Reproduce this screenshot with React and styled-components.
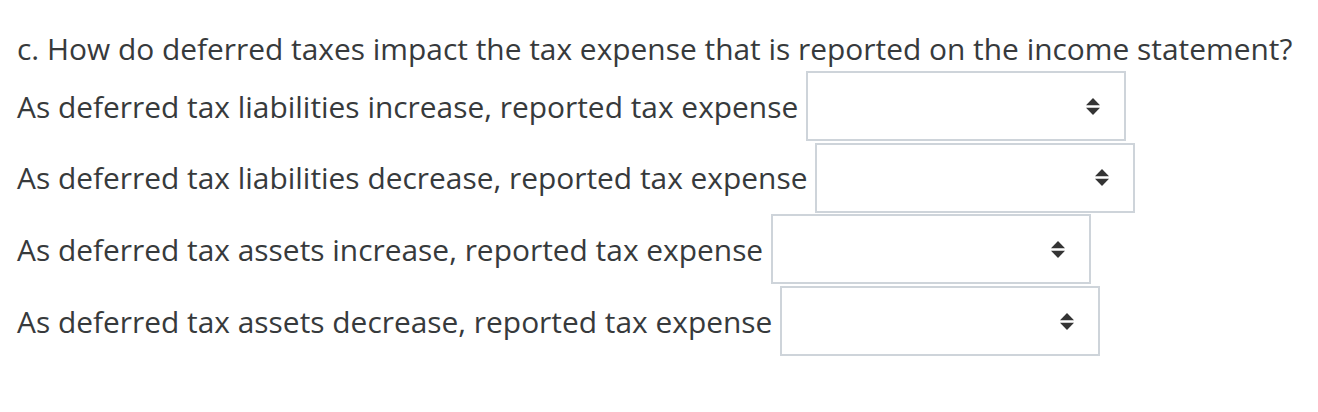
import React from 'react';
import styled, { createGlobalStyle } from 'styled-components';

const GlobalStyle = createGlobalStyle`
  body {
    margin: 0;
    background: #fff;
    font-family: 'Open Sans', 'Liberation Sans', sans-serif;
    color: #373a3c;
  }
`;

const Question = styled.div`
  padding: 26px 0 0 17px;
  font-size: 29.9px;
  line-height: 45px;
`;

const Prompt = styled.p`
  margin: 0;
`;

const Row = styled.div`
  display: flex;
  align-items: center;
  gap: 8px;
  margin-bottom: 1.7px;
`;

const Label = styled.span`
  white-space: nowrap;
`;

const SelectBox = styled.div`
  box-sizing: border-box;
  width: 320px;
  height: 70px;
  border: 2px solid #ced4da;
  background: #fff;
  display: flex;
  align-items: center;
  justify-content: flex-end;
  padding-right: 24px;
`;

// up/down sort caret shown at the right of each select
const SortIcon = () => (
  <svg width="14" height="17" viewBox="0 0 14 17" aria-hidden="true">
    <path d="M7 0 L14 7.3 L0 7.3 Z" fill="#343434" />
    <path d="M0 9.7 L14 9.7 L7 17 Z" fill="#343434" />
  </svg>
);

const rows = [
  'As deferred tax liabilities increase, reported tax expense',
  'As deferred tax liabilities decrease, reported tax expense',
  'As deferred tax assets increase, reported tax expense',
  'As deferred tax assets decrease, reported tax expense',
];

export default function App() {
  return (
    <>
      <GlobalStyle />
      <Question>
        <Prompt>c. How do deferred taxes impact the tax expense that is reported on the income statement?</Prompt>
        {rows.map((text) => (
          <Row key={text}>
            <Label>{text}</Label>
            <SelectBox role="combobox" aria-label={text}>
              <SortIcon />
            </SelectBox>
          </Row>
        ))}
      </Question>
    </>
  );
}
